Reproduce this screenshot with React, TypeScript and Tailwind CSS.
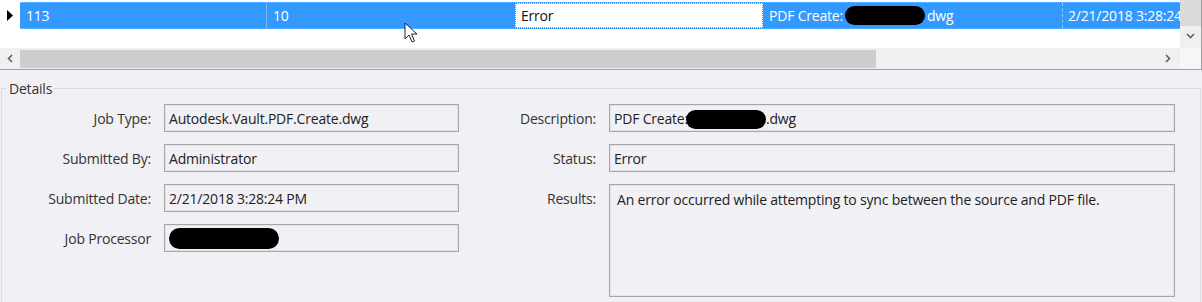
import * as React from "react"

const font = { fontFamily: '"Open Sans", "Noto Sans", Arial, sans-serif' }

function Blob({ w, h = 16 }: { w: number; h?: number }) {
    return <span className="inline-block shrink-0 rounded-full bg-black align-middle" style={{ width: w, height: h }} />
}

function Field({ children, className = "" }: { children?: React.ReactNode; className?: string }) {
    return (
        <div className={`border border-[#a6a6a6] bg-[#f1f0f4] px-[4px] text-[14px] tracking-[-0.2px] text-[#222] shadow-[inset_0_0_0_1px_#e4e3e7] ${className}`}>
            {children}
        </div>
    )
}

function Label({ children, top }: { children: React.ReactNode; top?: boolean }) {
    return (
        <div className={`flex h-[28px] items-center justify-end whitespace-nowrap pr-[13px] text-[14px] tracking-[-0.2px] text-[#333] ${top ? "self-start" : ""}`}>
            {children}
        </div>
    )
}

export default function App() {
    return (
        <div className="relative h-[302px] w-[1202px] overflow-hidden bg-[#f1f0f4]" style={font}>
            {/* ── Grid ── */}
            <div className="border-r border-b border-[#a0a0a0] bg-white">
                <div className="flex h-[48px]">
                    <div className="flex w-[20px] shrink-0 items-start justify-center pt-[10px]">
                        <svg width="6" height="11" viewBox="0 0 6 11"><path d="M0 0 L6 5.5 L0 11 Z" fill="#000" /></svg>
                    </div>
                    <div className="min-w-0 flex-1 pt-[2px]">
                        <div className="flex h-[27px] border-y border-dotted border-[#8fb8e4] bg-[#3399ff] text-[14px] tracking-[-0.2px] text-white">
                            <div className="flex w-[247px] shrink-0 items-center border-r border-[#7fb4ea] pl-[6px]">113</div>
                            <div className="flex w-[248px] shrink-0 items-center pl-[6px]">10</div>
                            <div className="flex w-[248px] shrink-0 items-center border border-dotted border-[#888] bg-white pl-[5px] text-[#111]">Error</div>
                            <div className="flex w-[299px] shrink-0 items-center gap-[2px] pl-[6px] whitespace-nowrap">
                                PDF Create: <Blob w={80} h={19} />dwg
                            </div>
                            <div className="flex min-w-0 flex-1 items-center overflow-hidden border-l border-dashed border-[#9cc9f5] pl-[5px] whitespace-nowrap">2/21/2018 3:28:24 PM</div>
                        </div>
                    </div>
                    <div className="flex w-[21px] shrink-0 flex-col bg-[#f0f0f0]">
                        <div className="h-[26px] bg-[#dadada]" />
                        <div className="flex flex-1 items-center justify-center pb-[2px]">
                            <svg width="9" height="6" viewBox="0 0 9 6"><path d="M1 1 L4.5 4.5 L8 1" stroke="#606060" strokeWidth="1.6" fill="none" /></svg>
                        </div>
                    </div>
                </div>
                <div className="flex h-[21px] items-center bg-[#f0f0f0]">
                    <div className="flex w-[20px] shrink-0 justify-center">
                        <svg width="6" height="9" viewBox="0 0 6 9"><path d="M5 1 L1.5 4.5 L5 8" stroke="#606060" strokeWidth="1.6" fill="none" /></svg>
                    </div>
                    <div className="h-[18px] w-[856px] shrink-0 bg-[#cdcdcd]" />
                    <div className="flex-1" />
                    <div className="flex w-[24px] shrink-0 justify-center">
                        <svg width="6" height="9" viewBox="0 0 6 9"><path d="M1 1 L4.5 4.5 L1 8" stroke="#606060" strokeWidth="1.6" fill="none" /></svg>
                    </div>
                    <div className="h-full w-[21px] shrink-0 bg-[#f7f7f7]" />
                </div>
            </div>

            {/* ── Details group ── */}
            <div className="relative mx-[1px] mt-[18px] h-[300px] border-t border-l border-r border-[#dcdbdf]">
                <span className="absolute -top-[11px] left-[5px] bg-[#f1f0f4] px-[2px] text-[14px] tracking-[-0.2px] text-[#333]">Details</span>
                <div className="grid grid-cols-[162px_295px_150px_566px] grid-rows-[28px_28px_28px_28px_33px] gap-y-[12px] pt-[15px]">
                    <Label>Job Type:</Label>
                    <Field className="flex items-center">Autodesk.Vault.PDF.Create.dwg</Field>
                    <Label>Description:</Label>
                    <Field className="flex items-center whitespace-nowrap">PDF Create:<span className="-ml-[2px]"><Blob w={80} h={19} /></span>.dwg</Field>

                    <Label>Submitted By:</Label>
                    <Field className="flex items-center">Administrator</Field>
                    <Label>Status:</Label>
                    <Field className="flex items-center">Error</Field>

                    <Label>Submitted Date:</Label>
                    <Field className="flex items-center">2/21/2018 3:28:24 PM</Field>
                    <Label top>Results:</Label>
                    <Field className="row-span-3 pt-[4px] pl-[7px]">An error occurred while attempting to sync between the source and PDF file.</Field>

                    <Label>Job Processor</Label>
                    <Field className="flex items-center"><Blob w={110} h={21} /></Field>
                </div>
            </div>

            {/* cursor */}
            <svg className="absolute left-[404px] top-[22px]" width="14" height="22" viewBox="0 0 14 22">
                <path d="M1 1 L1 17 L5 13 L8 20 L10.5 19 L7.5 12 L13 12 Z" fill="#fff" stroke="#222" strokeWidth="1" strokeLinejoin="round" />
            </svg>
        </div>
    )
}
